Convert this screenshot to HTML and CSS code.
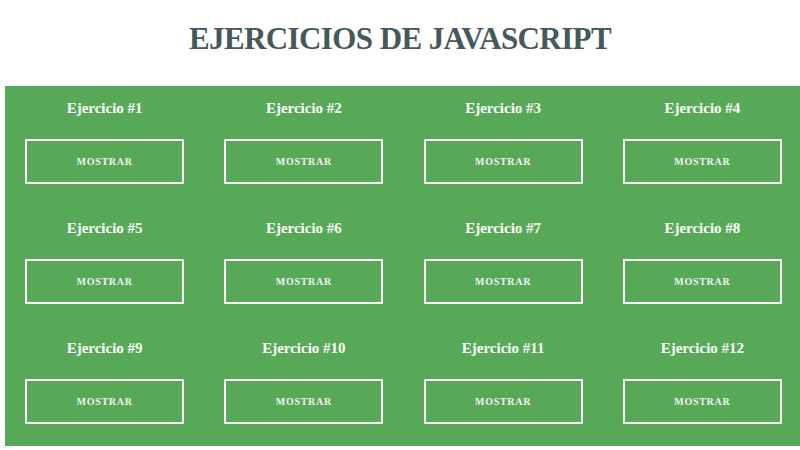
FILE: index.html
```html
<!DOCTYPE html>
<html lang="es">
<head>
<meta charset="utf-8">
<title>Ejercicios de JavaScript</title>
<link rel="stylesheet" href="styles.css">
</head>
<body>
<header class="header">
  <h1 class="title">EJERCICIOS DE JAVASCRIPT</h1>
</header>
<main class="grid">
  <div class="cell"><h3 class="cell-title">Ejercicio #1</h3><button class="btn">MOSTRAR</button></div>
  <div class="cell"><h3 class="cell-title">Ejercicio #2</h3><button class="btn">MOSTRAR</button></div>
  <div class="cell"><h3 class="cell-title">Ejercicio #3</h3><button class="btn">MOSTRAR</button></div>
  <div class="cell"><h3 class="cell-title">Ejercicio #4</h3><button class="btn">MOSTRAR</button></div>
  <div class="cell"><h3 class="cell-title">Ejercicio #5</h3><button class="btn">MOSTRAR</button></div>
  <div class="cell"><h3 class="cell-title">Ejercicio #6</h3><button class="btn">MOSTRAR</button></div>
  <div class="cell"><h3 class="cell-title">Ejercicio #7</h3><button class="btn">MOSTRAR</button></div>
  <div class="cell"><h3 class="cell-title">Ejercicio #8</h3><button class="btn">MOSTRAR</button></div>
  <div class="cell"><h3 class="cell-title">Ejercicio #9</h3><button class="btn">MOSTRAR</button></div>
  <div class="cell"><h3 class="cell-title">Ejercicio #10</h3><button class="btn">MOSTRAR</button></div>
  <div class="cell"><h3 class="cell-title">Ejercicio #11</h3><button class="btn">MOSTRAR</button></div>
  <div class="cell"><h3 class="cell-title">Ejercicio #12</h3><button class="btn">MOSTRAR</button></div>
</main>
</body>
</html>
```
FILE: styles.css
```css
html, body {
  margin: 0;
  padding: 0;
  background: #ffffff;
  font-family: "Liberation Serif", "Times New Roman", serif;
  overflow: hidden;
}
.header {
  height: 86px;
  display: flex;
  align-items: center;
  justify-content: center;
}
.title {
  margin: 0;
  font-size: 31px;
  letter-spacing: -0.6px;
  font-weight: bold;
  color: #45595a;
  line-height: 1;
  padding-bottom: 10px;
}
.grid {
  margin-left: 5px;
  width: 797px;
  height: 360px;
  background: #57a957;
  display: grid;
  grid-template-columns: repeat(4, 1fr);
  grid-template-rows: repeat(3, 1fr);
}
.cell {
  display: flex;
  flex-direction: column;
  align-items: center;
  padding-top: 12px;
}
.cell-title {
  margin: 0;
  font-size: 15px;
  line-height: 20px;
  font-weight: bold;
  color: #ffffff;
}
.btn {
  margin-top: 21px;
  width: 159px;
  height: 45px;
  box-sizing: border-box;
  border: 2px solid #ffffff;
  background: transparent;
  color: #f2f2f2;
  font-family: "Liberation Serif", "Times New Roman", serif;
  font-weight: bold;
  font-size: 10px;
  letter-spacing: 0.7px;
  padding: 0;
}
```
